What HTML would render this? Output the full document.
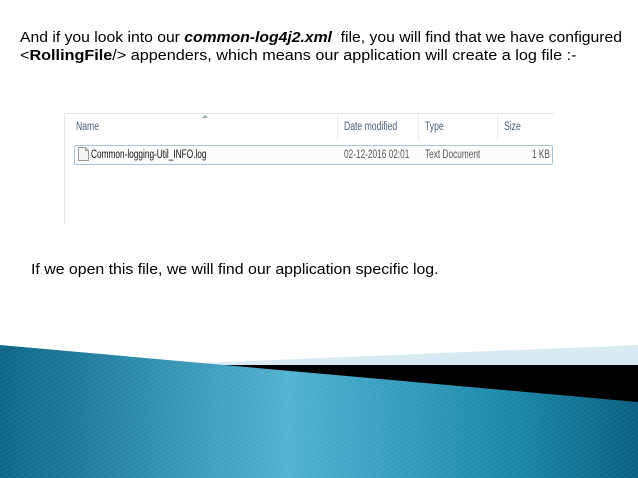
<!DOCTYPE html>
<html><head><meta charset="utf-8"><style>
html,body{margin:0;padding:0}
body{width:638px;height:478px;position:relative;overflow:hidden;background:#fff;font-family:"Liberation Sans","DejaVu Sans",sans-serif;color:#000}
.t{position:absolute;left:20px;font-size:15px;white-space:nowrap;transform-origin:left}
.box{position:absolute;left:64px;top:113px;width:489px;height:110px;border-top:1px solid #dfe6ee;border-left:1px solid #e4e4e4;background:#fff}
.h{position:absolute;top:121px;font-size:11.5px;color:#4c607a;transform:scaleX(0.75);transform-origin:left;white-space:nowrap}
.sep{position:absolute;top:113px;width:1px;height:28px;background:#e8ecf0}
.row{position:absolute;left:74px;top:145px;width:477px;height:18px;border:1px solid #a9c2dc;border-radius:2px;background:#fbfcfe}
.c{position:absolute;top:149px;font-size:11.5px;color:#222;transform:scaleX(0.72);transform-origin:left;white-space:nowrap}
.c.g{color:#555}
</style></head><body>
<div class="t" style="top:29px;transform:scaleX(1.048)">And if you look into our <b><i>common-log4j2.xml</i></b>&nbsp; file, you will find that we have configured</div>
<div class="t" style="top:47px;transform:scaleX(1.08)">&lt;<span style="font-weight:600">RollingFile</span>/&gt; appenders, which means our application will create a log file :-</div>

<div class="box"></div>
<div class="sep" style="left:337px"></div>
<div class="sep" style="left:418px"></div>
<div class="sep" style="left:497px"></div>
<div style="position:absolute;left:202px;top:115px;width:0;height:0;border-left:3px solid transparent;border-right:3px solid transparent;border-bottom:3px solid #8aa"></div>
<div class="h" style="left:76px">Name</div>
<div class="h" style="left:344px">Date modified</div>
<div class="h" style="left:425px">Type</div>
<div class="h" style="left:504px">Size</div>
<div class="row"></div>
<svg style="position:absolute;left:78px;top:147px" width="11" height="14"><path d="M0.5 0.5H7.5L10.5 3.5V13.5H0.5Z" fill="#f4f4f4" stroke="#999"/><path d="M7.5 0.5V3.5H10.5" fill="none" stroke="#999"/></svg>
<div class="c" style="left:91px;color:#111">Common-logging-Util_INFO.log</div>
<div class="c g" style="left:344px">02-12-2016 02:01</div>
<div class="c g" style="left:425px">Text Document</div>
<div class="c g" style="left:532px">1 KB</div>

<div class="t" style="top:261px;left:31px;transform:scaleX(1.058)">If we open this file, we will find our application specific log.</div>

<svg style="position:absolute;left:0;top:330px" width="638" height="148">
<defs>
<linearGradient id="bg" x1="0" y1="0" x2="1" y2="0">
<stop offset="0" stop-color="#0d6688"/>
<stop offset="0.45" stop-color="#52b2d2"/>
<stop offset="0.8" stop-color="#1b88aa"/>
<stop offset="1" stop-color="#0a5f80"/>
</linearGradient>
<pattern id="hatch" width="4" height="4" patternUnits="userSpaceOnUse" patternTransform="rotate(60)"><rect width="1" height="4" fill="#fff" opacity="0.06"/></pattern>
</defs>
<polygon points="150,35 638,15 638,35" fill="#d9eaf2"/>
<polygon points="170,35 638,35 638,73" fill="#000"/>
<polygon points="0,15 638,72 638,148 0,148" fill="url(#bg)"/>
<polygon points="0,15 638,72 638,148 0,148" fill="url(#hatch)"/>
</svg>
</body></html>
